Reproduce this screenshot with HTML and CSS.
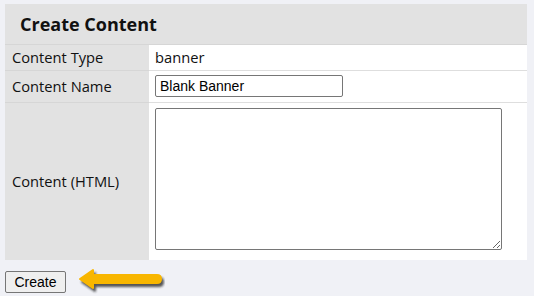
FILE: index.html
```html
<!DOCTYPE html>
<html>
<head>
    <title>Create Content</title>
    <link rel="stylesheet" href="styles.css">
</head>
<body>
    <form action="/content/create" method="post">
        <table class="content-form">
            <tr>
                <th colspan="2" class="form-title">Create Content</th>
            </tr>
            <tr class="row-type">
                <td class="label">Content Type</td>
                <td class="value">banner</td>
            </tr>
            <tr class="row-name">
                <td class="label">Content Name</td>
                <td class="value"><input type="text" name="name" value="Blank Banner"></td>
            </tr>
            <tr class="row-html">
                <td class="label">Content (HTML)</td>
                <td class="value"><textarea name="html"></textarea></td>
            </tr>
        </table>
        <div class="actions">
            <input type="submit" value="Create">
            <svg class="arrow" width="88" height="27" viewBox="0 0 88 27">
                <defs>
                    <filter id="shadow" x="-10%" y="-30%" width="120%" height="160%">
                        <feGaussianBlur stdDeviation="1"/>
                    </filter>
                </defs>
                <path d="M3,12 L16,3 L16,8 L80,8 Q84,8 84,12 Q84,16 80,16 L16,16 L16,21 Z" fill="#222" stroke="#222" stroke-width="2" stroke-linejoin="round" opacity="0.75" filter="url(#shadow)" transform="translate(2,3)"/>
                <path d="M3,12 L16,3 L16,8 L80,8 Q84,8 84,12 Q84,16 80,16 L16,16 L16,21 Z" fill="#f8b600" stroke="#f8b600" stroke-width="2" stroke-linejoin="round"/>
            </svg>
        </div>
    </form>
</body>
</html>
```

FILE: styles.css
```css
body {
    font-family: "Open Sans", Arial, sans-serif;
    background-color: #f0f1f6;
    margin: 0;
    padding: 4px 7px 0 5px;
}
.content-form {
    width: 522px;
    border-collapse: collapse;
    font-size: 14.7px;
    color: #111;
}
.form-title {
    background-color: #e2e2e2;
    text-align: left;
    font-size: 18px;
    font-weight: bold;
    height: 40px;
    padding: 0 0 0 15px;
    box-sizing: border-box;
    border-bottom: 1px solid #d6d6d6;
}
.content-form td {
    padding: 0;
    border-top: 1px solid #dedede;
}
.content-form td.label {
    background-color: #e2e2e2;
    width: 137px;
    padding-left: 7px;
    border-top-color: #d6d6d6;
}
.content-form td.value {
    background-color: #fff;
    padding-left: 6px;
}
.row-type td {
    height: 25px;
}
.row-name td {
    height: 31px;
}
.row-html td {
    height: 157px;
}
input[type="text"] {
    font-family: Arial, sans-serif;
    font-size: 14px;
    width: 188px;
    height: 22px;
    box-sizing: border-box;
    padding: 1px 4px;
    margin: 0;
    border: 1px solid #767676;
    border-radius: 2px;
    display: block;
}
textarea {
    display: block;
    width: 347px;
    height: 142px;
    box-sizing: border-box;
    margin: -5px 0 0 0;
    border: 1px solid #767676;
    border-radius: 2px;
}
.actions {
    display: flex;
    align-items: center;
    margin-top: 11px;
}
input[type="submit"] {
    font-family: Arial, sans-serif;
    font-size: 14px;
    width: 61px;
    height: 22px;
    padding: 0;
    background-color: #efefef;
    border: 1px solid #767676;
    border-radius: 2px;
    color: #000;
}
.arrow {
    margin-left: 11px;
    margin-top: -4px;
}
```
